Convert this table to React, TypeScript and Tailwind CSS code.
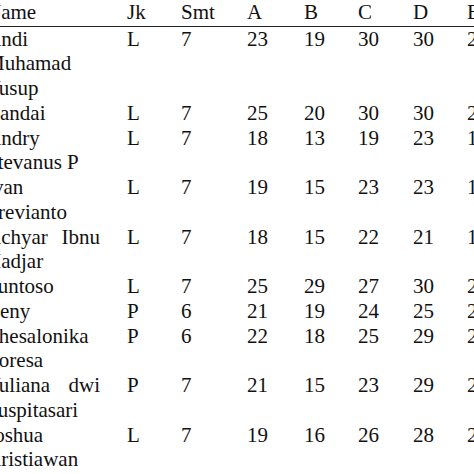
type Row = {
  name: { text: string; justify?: boolean }[]
  jk: string
  smt: string
  scores: string[]
}

const rows: Row[] = [
  { name: [{ text: 'Andi' }, { text: 'Muhamad' }, { text: 'Yusup' }], jk: 'L', smt: '7', scores: ['23', '19', '30', '30', '26'] },
  { name: [{ text: 'Bandai' }], jk: 'L', smt: '7', scores: ['25', '20', '30', '30', '27'] },
  { name: [{ text: 'Andry' }, { text: 'Stevanus P' }], jk: 'L', smt: '7', scores: ['18', '13', '19', '23', '17'] },
  { name: [{ text: 'Ivan' }, { text: 'Trevianto' }], jk: 'L', smt: '7', scores: ['19', '15', '23', '23', '18'] },
  { name: [{ text: 'Achyar Ibnu', justify: true }, { text: 'Hadjar' }], jk: 'L', smt: '7', scores: ['18', '15', '22', '21', '19'] },
  { name: [{ text: 'Suntoso' }], jk: 'L', smt: '7', scores: ['25', '29', '27', '30', '28'] },
  { name: [{ text: 'Reny' }], jk: 'P', smt: '6', scores: ['21', '19', '24', '25', '24'] },
  { name: [{ text: 'Thesalonika' }, { text: 'Loresa' }], jk: 'P', smt: '6', scores: ['22', '18', '25', '29', '26'] },
  { name: [{ text: 'Yuliana dwi', justify: true }, { text: 'Puspitasari' }], jk: 'P', smt: '7', scores: ['21', '15', '23', '29', '25'] },
  { name: [{ text: 'Joshua' }, { text: 'Kristiawan' }], jk: 'L', smt: '7', scores: ['19', '16', '26', '28', '24'] },
]

const cols = 'grid grid-cols-[141px_54px_66px_57px_54px_55px_54px_60px]'

export default function App() {
  return (
    <div className="w-[474px] h-[474px] overflow-hidden bg-white text-[#111] font-['Liberation_Serif',serif] text-[21px] leading-[24.75px]">
      <div className="w-max -ml-[14px]">
        <div className={`${cols} h-[26.5px] border-b-[1.5px] border-[#222]`}>
          <div>Name</div>
          <div>Jk</div>
          <div>Smt</div>
          <div>A</div>
          <div>B</div>
          <div>C</div>
          <div>D</div>
          <div>E</div>
        </div>
        {rows.map((r, i) => (
          <div key={i} className={cols}>
            <div className="pr-[27px]">
              {r.name.map((l, j) => (
                <div key={j} className={l.justify ? 'text-justify [text-align-last:justify]' : ''}>
                  {l.text}
                </div>
              ))}
            </div>
            <div>{r.jk}</div>
            <div>{r.smt}</div>
            {r.scores.map((s, k) => (
              <div key={k}>{s}</div>
            ))}
          </div>
        ))}
      </div>
    </div>
  )
}
